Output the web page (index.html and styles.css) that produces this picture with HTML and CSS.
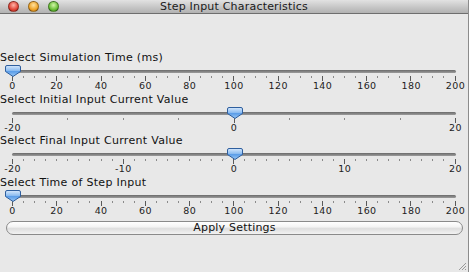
FILE: index.html
```html
<!DOCTYPE html>
<html lang="en">
<head>
    <meta charset="UTF-8">
    <meta name="viewport" content="width=device-width, initial-scale=1.0">
    <title>Step Input Characteristics</title>
    <link rel="stylesheet" href="styles.css">
</head>
<body>
    <svg class="defs" width="0" height="0">
        <defs>
            <linearGradient id="thumbFill" x1="0" y1="0" x2="0" y2="1">
                <stop offset="0" stop-color="#d6e8fc"/>
                <stop offset="0.45" stop-color="#8fbef1"/>
                <stop offset="0.55" stop-color="#5b9de8"/>
                <stop offset="1" stop-color="#9ccaf6"/>
            </linearGradient>
            <symbol id="thumb" viewBox="0 0 16 12">
                <path d="M2 0.5 H14 Q15.5 0.5 15.5 2 V6.5 L8 11.5 L0.5 6.5 V2 Q0.5 0.5 2 0.5 Z" fill="url(#thumbFill)" stroke="#2f5f9e" stroke-width="1"/>
            </symbol>
        </defs>
    </svg>

    <div class="window">
        <div class="titlebar">
            <div class="lights">
                <span class="light close"></span>
                <span class="light minimize"></span>
                <span class="light zoom"></span>
            </div>
            <div class="title">Step Input Characteristics</div>
            <div></div>
        </div>

        <div class="content">
            <div class="control">
                <div class="control-label">Select Simulation Time (ms)</div>
                <div class="slider">
                    <div class="track-row">
                        <div class="track"></div>
                        <svg class="thumb" style="left: 0%"><use href="#thumb"/></svg>
                    </div>
                    <div class="ticks" data-count="41" data-major="4"></div>
                    <div class="scale">
                        <span>0</span><span>20</span><span>40</span><span>60</span><span>80</span><span>100</span>
                        <span>120</span><span>140</span><span>160</span><span>180</span><span>200</span>
                    </div>
                </div>
            </div>

            <div class="control">
                <div class="control-label">Select Initial Input Current Value</div>
                <div class="slider">
                    <div class="track-row">
                        <div class="track"></div>
                        <svg class="thumb" style="left: 50%"><use href="#thumb"/></svg>
                    </div>
                    <div class="ticks" data-count="9" data-major="4"></div>
                    <div class="scale">
                        <span>-20</span><span>0</span><span>20</span>
                    </div>
                </div>
            </div>

            <div class="control">
                <div class="control-label">Select Final Input Current Value</div>
                <div class="slider">
                    <div class="track-row">
                        <div class="track"></div>
                        <svg class="thumb" style="left: 50%"><use href="#thumb"/></svg>
                    </div>
                    <div class="ticks" data-count="41" data-major="10"></div>
                    <div class="scale">
                        <span>-20</span><span>-10</span><span>0</span><span>10</span><span>20</span>
                    </div>
                </div>
            </div>

            <div class="control">
                <div class="control-label">Select Time of Step Input</div>
                <div class="slider">
                    <div class="track-row">
                        <div class="track"></div>
                        <svg class="thumb" style="left: 0%"><use href="#thumb"/></svg>
                    </div>
                    <div class="ticks" data-count="41" data-major="4"></div>
                    <div class="scale">
                        <span>0</span><span>20</span><span>40</span><span>60</span><span>80</span><span>100</span>
                        <span>120</span><span>140</span><span>160</span><span>180</span><span>200</span>
                    </div>
                </div>
            </div>

            <button type="button" class="apply-btn">Apply Settings</button>
        </div>

        <svg class="grip" width="9" height="9" viewBox="0 0 9 9">
            <path d="M8 1 L1 8 M8 4 L4 8 M8 7 L7 8" stroke="#9a9a9a" stroke-width="1"/>
        </svg>
    </div>

    <script>
        document.querySelectorAll('.ticks').forEach(row => {
            const count = Number(row.dataset.count);
            const major = Number(row.dataset.major);
            for (let i = 0; i < count; i++) {
                const tick = document.createElement('i');
                if (i % major === 0) tick.className = 'major';
                row.appendChild(tick);
            }
        });
    </script>
</body>
</html>
```

FILE: styles.css
```css
body {
    margin: 0;
    background: #ffffff;
    font-family: "DejaVu Sans", "Liberation Sans", sans-serif;
    color: #111;
}
.defs {
    position: absolute;
}
.window {
    position: relative;
    width: 468px;
    height: 272px;
    background: #e8e8e8;
    border-right: 1px solid #8c8c8c;
    overflow: hidden;
}
.titlebar {
    display: grid;
    grid-template-columns: 1fr auto 1fr;
    align-items: center;
    height: 13px;
    background: linear-gradient(#e2e2e2, #c4c4c4 60%, #b2b2b2);
    border-bottom: 1px solid #6e6e6e;
}
.lights {
    display: flex;
    gap: 9px;
    padding-left: 8px;
}
.light {
    width: 11px;
    height: 11px;
    border-radius: 50%;
    box-sizing: border-box;
    border: 1px solid rgba(0, 0, 0, 0.35);
}
.light.close {
    background: radial-gradient(circle at 50% 35%, #ffb3a8, #e2473a 60%, #a81f14);
}
.light.minimize {
    background: radial-gradient(circle at 50% 35%, #ffe2a0, #f0a52a 60%, #b36b0c);
}
.light.zoom {
    background: radial-gradient(circle at 50% 35%, #d2f5a8, #6cc13a 60%, #2f7d14);
}
.title {
    font-size: 11px;
    line-height: 13px;
    letter-spacing: 0.2px;
    color: #1a1a1a;
}
.content {
    display: flex;
    flex-direction: column;
    gap: 2.5px;
    padding-top: 37px;
}
.control-label {
    font-size: 11px;
    line-height: 13px;
    letter-spacing: 0.3px;
    color: #111;
}
.slider {
    margin: 0 12px;
}
.track-row {
    position: relative;
    height: 12px;
}
.track {
    position: absolute;
    left: 0;
    right: 0;
    top: 6px;
    height: 3px;
    border-radius: 2px;
    background: linear-gradient(#6a6a6a, #9c9c9c);
}
.thumb {
    position: absolute;
    top: 1px;
    width: 16px;
    height: 12px;
    margin-left: -7.5px;
}
.ticks {
    display: flex;
    justify-content: space-between;
    align-items: flex-start;
    height: 5px;
}
.ticks i {
    width: 1px;
    height: 2px;
    background: #8a8a8a;
}
.ticks i.major {
    height: 5px;
    background: #5a5a5a;
}
.scale {
    display: flex;
    justify-content: space-between;
    height: 9px;
    font-size: 9.5px;
    line-height: 9px;
    letter-spacing: 0.4px;
    color: #222;
}
.scale span {
    width: 1px;
    display: flex;
    justify-content: center;
    white-space: nowrap;
}
.apply-btn {
    margin: 4px 5px 0 6px;
    height: 14px;
    padding: 0;
    border: 1px solid #8a8a8a;
    border-radius: 7px;
    background: linear-gradient(#ffffff, #f4f4f4 40%, #dedede 55%, #f2f2f2);
    font-family: "DejaVu Sans", "Liberation Sans", sans-serif;
    font-size: 11px;
    line-height: 12px;
    letter-spacing: 0.2px;
    color: #111;
}
.grip {
    position: absolute;
    right: 1px;
    bottom: 1px;
}
```
